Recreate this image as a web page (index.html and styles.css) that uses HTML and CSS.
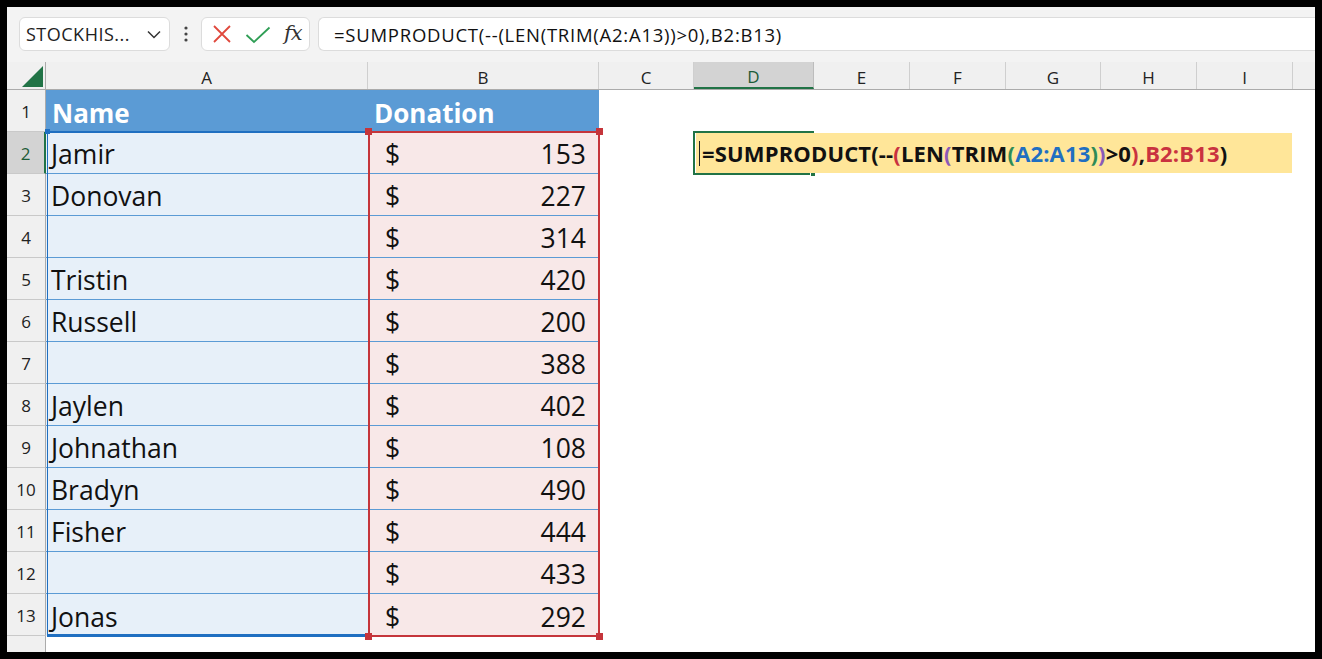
FILE: index.html
```html
<!DOCTYPE html>
<html>
<head>
<meta charset="utf-8">
<link rel="stylesheet" href="styles.css">
</head>
<body>
<div class="app">
  <div class="toolbar">
    <div class="namebox">
      <span class="nb-text">STOCKHIS...</span>
      <svg class="chev" width="14" height="9" viewBox="0 0 14 9"><path d="M1 1.5 L7 7.5 L13 1.5" fill="none" stroke="#333" stroke-width="1.5"/></svg>
    </div>
    <div class="dots">
      <svg width="4" height="16" viewBox="0 0 4 16"><circle cx="2" cy="2" r="1.6" fill="#444"/><circle cx="2" cy="8" r="1.6" fill="#444"/><circle cx="2" cy="14" r="1.6" fill="#444"/></svg>
    </div>
    <div class="fbtns">
      <svg class="ic-x" width="20" height="20" viewBox="0 0 20 20"><path d="M2 2 L18 18 M18 2 L2 18" stroke="#e0483c" stroke-width="1.8" fill="none"/></svg>
      <svg class="ic-ok" width="26" height="18" viewBox="0 0 26 18"><path d="M1.5 9 L9 16 L24.5 1.5" stroke="#2f9e55" stroke-width="1.8" fill="none"/></svg>
      <span class="fx">fx</span>
    </div>
    <div class="fbar">=SUMPRODUCT(--(LEN(TRIM(A2:A13))&gt;0),B2:B13)</div>
  </div>

  <div class="sheet">
    <div class="row hdr">
      <div class="rh corner"><svg width="39" height="28" viewBox="0 0 39 28"><polygon points="15,25 36,25 36,4" fill="#217346"/></svg></div>
      <div class="ch c-a">A</div>
      <div class="ch c-b">B</div>
      <div class="ch c-c">C</div>
      <div class="ch c-d sel">D</div>
      <div class="ch c-e">E</div>
      <div class="ch c-f">F</div>
      <div class="ch c-g">G</div>
      <div class="ch c-h">H</div>
      <div class="ch c-i">I</div>
      <div class="ch c-j"></div>
    </div>

    <div class="row r1">
      <div class="rh">1</div>
      <div class="cell c-a th">Name</div>
      <div class="cell c-b th">Donation</div>
    </div>

    <div class="row"><div class="rh sel">2</div><div class="cell c-a ta">Jamir</div><div class="cell c-b tb"><span>$</span><span>153</span></div></div>
    <div class="row"><div class="rh">3</div><div class="cell c-a ta">Donovan</div><div class="cell c-b tb"><span>$</span><span>227</span></div></div>
    <div class="row"><div class="rh">4</div><div class="cell c-a ta"></div><div class="cell c-b tb"><span>$</span><span>314</span></div></div>
    <div class="row"><div class="rh">5</div><div class="cell c-a ta">Tristin</div><div class="cell c-b tb"><span>$</span><span>420</span></div></div>
    <div class="row"><div class="rh">6</div><div class="cell c-a ta">Russell</div><div class="cell c-b tb"><span>$</span><span>200</span></div></div>
    <div class="row"><div class="rh">7</div><div class="cell c-a ta"></div><div class="cell c-b tb"><span>$</span><span>388</span></div></div>
    <div class="row"><div class="rh">8</div><div class="cell c-a ta">Jaylen</div><div class="cell c-b tb"><span>$</span><span>402</span></div></div>
    <div class="row"><div class="rh">9</div><div class="cell c-a ta">Johnathan</div><div class="cell c-b tb"><span>$</span><span>108</span></div></div>
    <div class="row"><div class="rh">10</div><div class="cell c-a ta">Bradyn</div><div class="cell c-b tb"><span>$</span><span>490</span></div></div>
    <div class="row"><div class="rh">11</div><div class="cell c-a ta">Fisher</div><div class="cell c-b tb"><span>$</span><span>444</span></div></div>
    <div class="row"><div class="rh">12</div><div class="cell c-a ta"></div><div class="cell c-b tb"><span>$</span><span>433</span></div></div>
    <div class="row"><div class="rh">13</div><div class="cell c-a ta last">Jonas</div><div class="cell c-b tb last"><span>$</span><span>292</span></div></div>
    <div class="row r14"><div class="rh"></div></div>

    <div class="range-a"><i class="hd tl-blue"></i></div>
    <div class="range-b"><i class="hd h-tl"></i><i class="hd h-tr"></i><i class="hd h-bl"></i><i class="hd h-br"></i></div>
    <div class="active"><i class="fill-h"></i></div>
    <div class="edit"><i class="caret"></i>=SUMPRODUCT(--<b class="p1">(</b>LEN<b class="p2">(</b>TRIM<b class="p3">(</b><b class="ref1">A2:A13</b><b class="p3">)</b><b class="p2">)</b>&gt;0<b class="p1">)</b>,<b class="ref2">B2:B13</b>)</div>
  </div>
</div>
</body>
</html>
```

FILE: styles.css
```css
* { box-sizing: border-box; }
html, body { margin: 0; padding: 0; }
body {
  background: #000;
  width: 1322px;
  height: 659px;
  overflow: hidden;
  font-family: "Open Sans", "Noto Sans", sans-serif;
}
.app {
  position: absolute;
  left: 7px;
  top: 7px;
  width: 1308px;
  height: 645px;
  background: #fff;
  overflow: hidden;
}
.toolbar {
  height: 55px;
  background: #f3f3f3;
  display: flex;
  align-items: flex-start;
  padding-top: 10px;
  padding-left: 12px;
}
.namebox {
  width: 151px;
  height: 34px;
  background: #fff;
  border: 1px solid #dcdcdc;
  border-radius: 6px;
  display: flex;
  align-items: center;
  justify-content: space-between;
  padding: 0 8px 0 6px;
}
.nb-text { font-size: 18px; color: #222; letter-spacing: 0.5px; }
.chev { margin-top: 1px; }
.dots {
  width: 31px;
  height: 34px;
  display: flex;
  align-items: center;
  justify-content: center;
}
.fbtns {
  width: 109px;
  height: 34px;
  background: #fff;
  border: 1px solid #dcdcdc;
  border-radius: 6px;
  display: flex;
  align-items: center;
  padding-left: 10px;
}
.ic-x { margin-right: 13px; }
.ic-ok { margin-right: 13px; margin-top: 1px; }
.fx {
  font-family: "DejaVu Serif", "Liberation Serif", serif;
  font-style: italic;
  font-size: 21px;
  color: #333;
  letter-spacing: -1px;
  margin-top: -3px;
}
.fbar {
  margin-left: 8px;
  flex: 1;
  height: 34px;
  background: #fff;
  border: 1px solid #dcdcdc;
  border-right: 0;
  border-radius: 6px 0 0 6px;
  display: flex;
  align-items: center;
  padding-left: 15px;
  font-size: 18.5px;
  letter-spacing: 0.75px;
  color: #111;
}

.sheet { position: relative; }
.row { display: flex; height: 42px; }
.row.hdr { height: 28px; background: #f0f0f0; border-bottom: 1px solid #ababab; }
.row.r14 { height: 16px; }
.rh {
  width: 39px;
  flex: none;
  background: #f0f0f0;
  border-right: 1px solid #ababab;
  border-bottom: 1px solid #c9c9c9;
  display: flex;
  align-items: center;
  justify-content: center;
  font-size: 17px;
  color: #222;
  padding-top: 2px;
}
.rh.sel { background: #d3d3d3; border-right: 2px solid #217346; color: #1d5c38; }
.rh.corner { border-bottom: 0; padding: 0; display: block; }
.rh.corner svg { display: block; }
.r14 .rh { border-bottom: 0; }
.ch {
  flex: none;
  border-right: 1px solid #cfcfcf;
  display: flex;
  align-items: center;
  justify-content: center;
  font-size: 17px;
  color: #222;
  padding-top: 3px;
}
.ch.sel { background: #d3d3d3; border-bottom: 2px solid #217346; color: #1d5c38; border-right-color: #bdbdbd; }
.c-a { width: 322px; }
.c-b { width: 231px; }
.c-c { width: 95px; }
.c-d { width: 120px; }
.c-e { width: 96px; }
.c-f { width: 96px; }
.c-g { width: 95px; }
.c-h { width: 96px; }
.c-i { width: 96px; }
.c-j { width: 22px; border-right: 0; }

.cell {
  flex: none;
  display: flex;
  align-items: flex-end;
  font-size: 26.5px;
  color: #111;
  padding-bottom: 1px;
}
.th {
  background: #5b9bd5;
  color: #fff;
  font-weight: 700;
  font-size: 26px;
  padding-left: 6px;
  padding-bottom: 1px;
}
.ta {
  background: #e7f0f9;
  border-bottom: 1px solid #5b9bd5;
  padding-left: 5px;
}
.tb {
  background: #f8e8e8;
  border-bottom: 1px solid #5b9bd5;
  padding-left: 17px;
  padding-right: 13px;
  justify-content: space-between;
}
.last { border-bottom: 0; }

.range-a {
  position: absolute;
  left: 40px;
  top: 69px;
  width: 321px;
  height: 506px;
  border-top: 2px solid #1f6fc1;
  border-bottom: 3px solid #1f6fc1;
  border-left: 1px solid #1f6fc1;
}
.range-b {
  position: absolute;
  left: 361px;
  top: 69px;
  width: 232px;
  height: 506px;
  border: 2px solid #c5353b;
}
.hd {
  position: absolute;
  width: 7px;
  height: 7px;
  background: #c5353b;
}
.h-tl { left: -5px; top: -5px; }
.h-tr { right: -5px; top: -5px; }
.h-bl { left: -5px; bottom: -5px; }
.h-br { right: -5px; bottom: -5px; }
.tl-blue { background: #1f6fc1; width: 5px; height: 5px; left: -3px; top: -4px; }

.active {
  position: absolute;
  left: 686px;
  top: 69px;
  width: 121px;
  height: 44px;
  border: 2px solid #217346;
}
.fill-h {
  position: absolute;
  right: -4px;
  bottom: -4px;
  width: 6px;
  height: 6px;
  background: #217346;
  border: 1px solid #fff;
}
.edit {
  position: absolute;
  left: 689px;
  top: 71px;
  width: 596px;
  height: 40px;
  background: #ffe699;
  display: flex;
  align-items: center;
  padding-left: 3px;
  font-size: 22px;
  font-weight: 700;
  color: #111;
  letter-spacing: 0.15px;
  white-space: nowrap;
}
.edit b { font-weight: 700; }
.caret {
  display: inline-block;
  width: 1px;
  height: 25px;
  background: #222;
  margin-right: 2px;
}
.p1 { color: #c9323f; }
.p2 { color: #8a5bb8; }
.p3 { color: #2e8b57; }
.ref1 { color: #1f6fc1; }
.ref2 { color: #c9323f; }
```
